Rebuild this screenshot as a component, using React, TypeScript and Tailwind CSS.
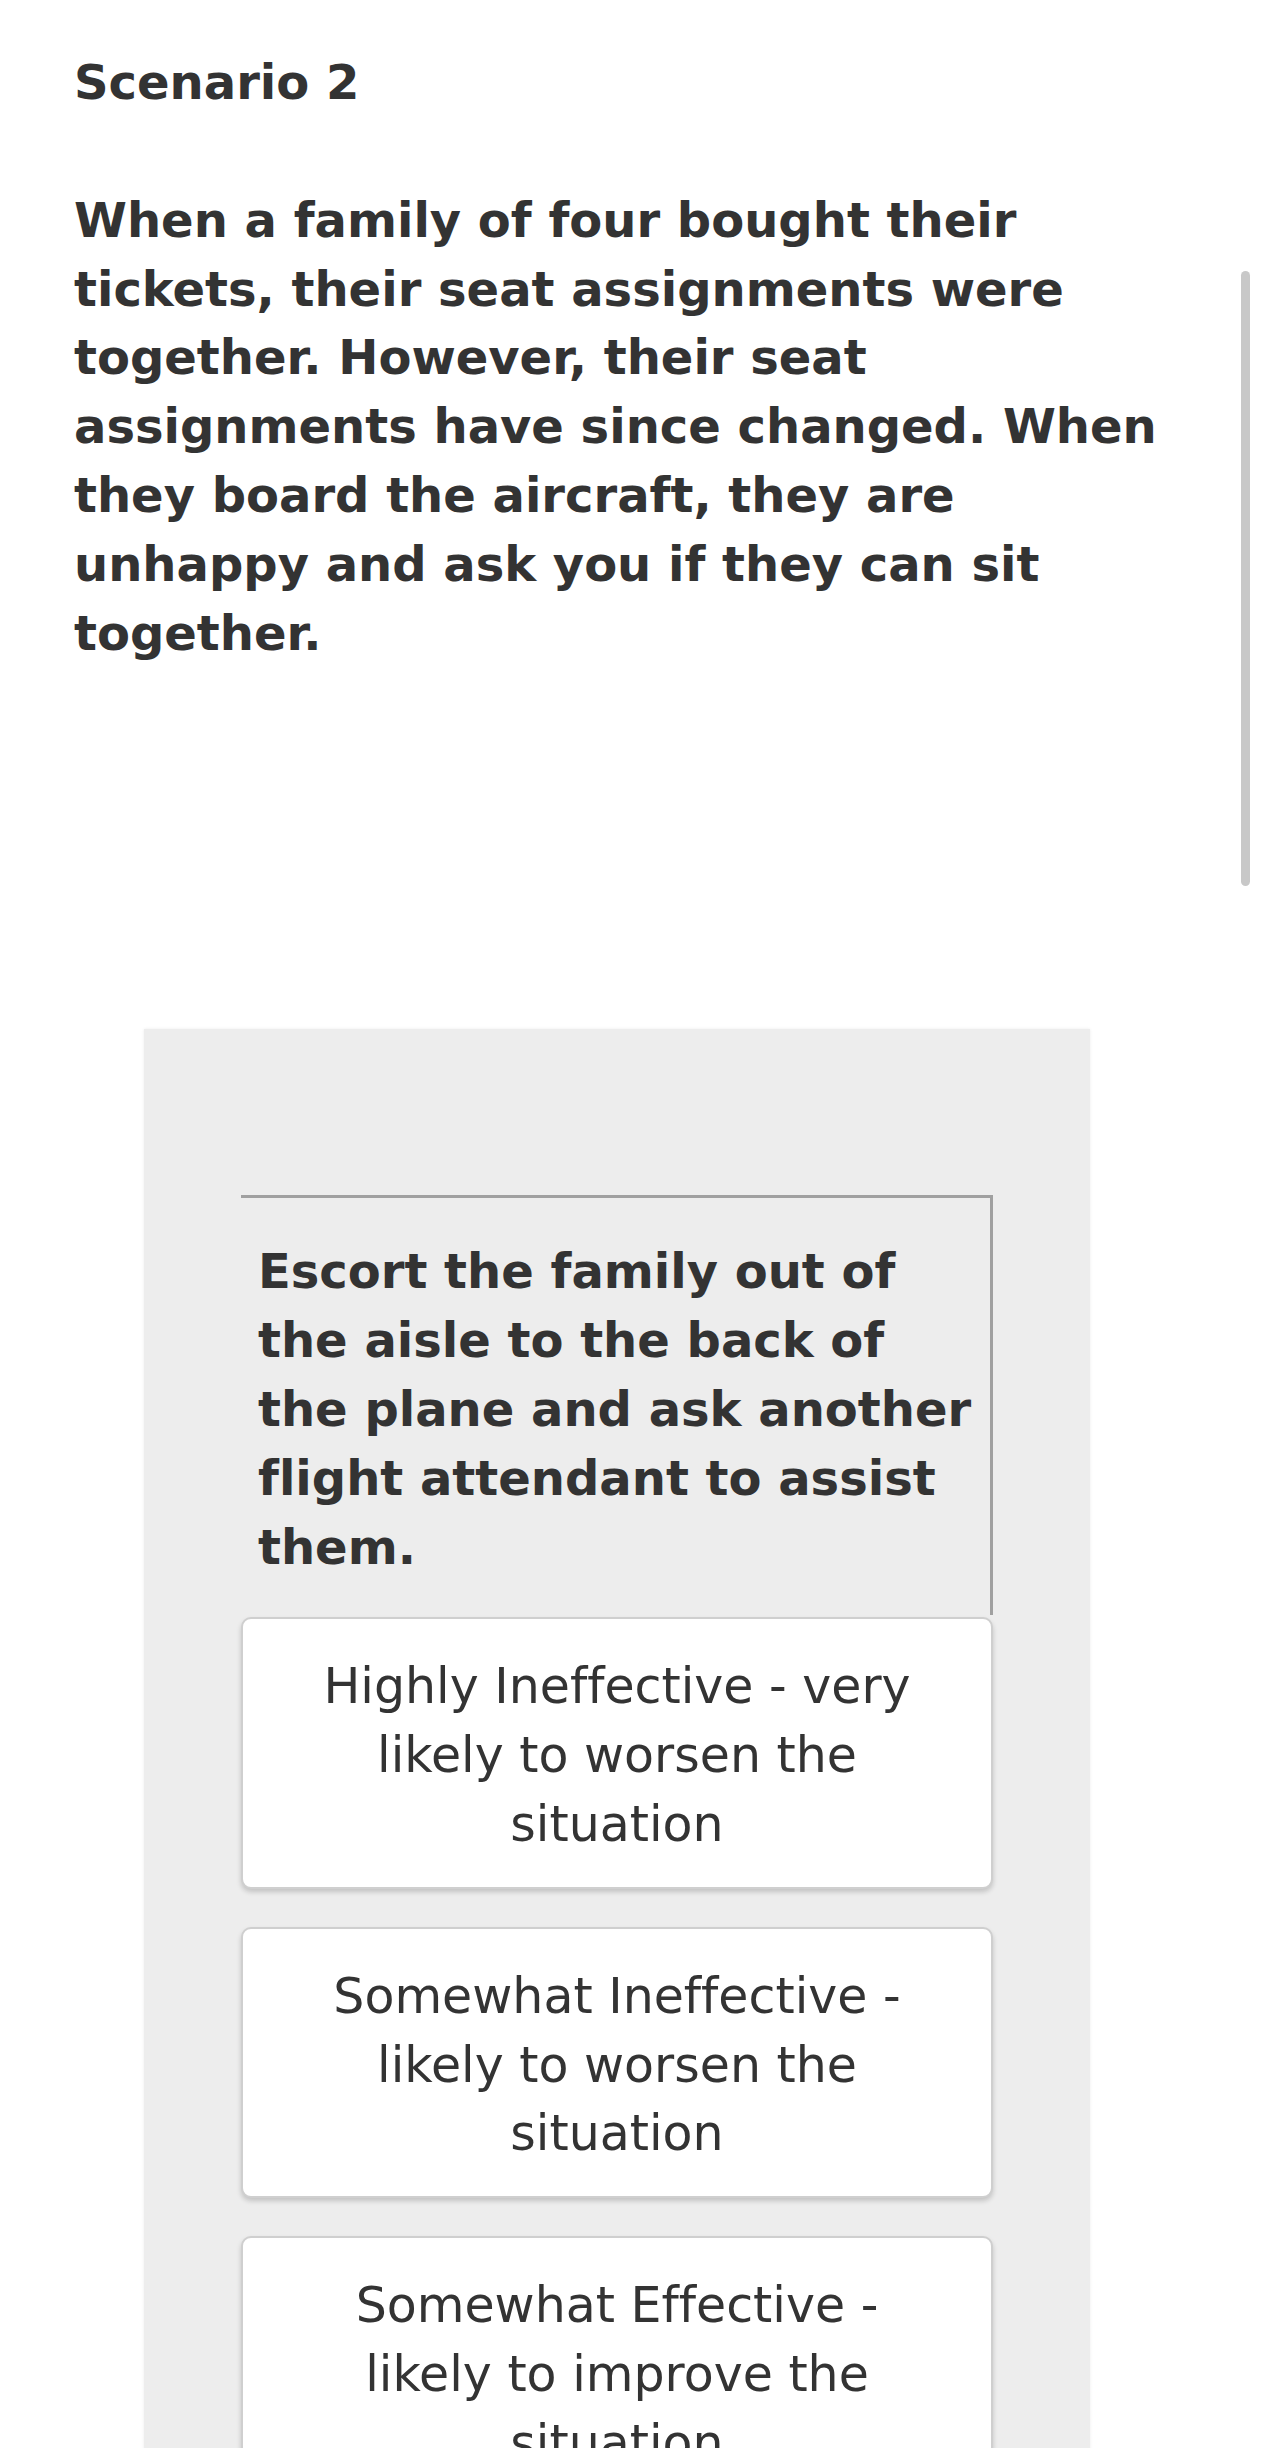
const OPTIONS = [
  "Highly Ineffective - very likely to worsen the situation",
  "Somewhat Ineffective - likely to worsen the situation",
  "Somewhat Effective - likely to improve the situation",
  "Highly Effective - very likely to improve the situation",
];

function OptionCard({ label }: { label: string }) {
  return (
    <button
      type="button"
      className="block w-full rounded-[10px] border-2 border-[#cfcfcf] bg-white px-[44px] pt-[34px] pb-[27px] text-center text-[49px] font-normal text-[#333] shadow-[0_3px_5px_rgba(0,0,0,0.18)]"
    >
      {label}
    </button>
  );
}

export default function App() {
  return (
    <div
      className="relative h-[2448px] overflow-hidden bg-white text-[48px] leading-[68.8px] text-[#333] [font-variant-ligatures:none]"
      style={{ fontFamily: '"DejaVu Sans", Verdana, sans-serif' }}
    >
      <div className="px-[74px] pt-[48px]">
        <h2 className="font-bold">Scenario 2</h2>
        <p className="mt-[69px] font-bold">
          When a family of four bought their tickets, their seat assignments were together. However,
          their seat assignments have since changed. When they board the aircraft, they are unhappy
          and ask you if they can sit together.
        </p>
      </div>

      <div className="ml-[144px] mt-[362px] w-[946px] bg-[#ededed] px-[97px] pt-[166px] pb-[200px] shadow-[0_0_3px_rgba(0,0,0,0.08)]">
        <div className="border-t-[3px] border-r-[3px] border-[#a0a0a0] pl-[17px] pr-[18px] pt-[39px] pb-[34px] font-bold">
          Escort the family out of the aisle to the back of the plane and ask another flight
          attendant to assist them.
        </div>
        <div className="mt-[2px] flex flex-col gap-[38px]">
          {OPTIONS.map((o) => (
            <OptionCard key={o} label={o} />
          ))}
        </div>
      </div>

      {/* overlay scrollbar thumb */}
      <div className="absolute left-[1241px] top-[271px] h-[615px] w-[9px] rounded-full bg-[#c8c8c8]" />
    </div>
  );
}
